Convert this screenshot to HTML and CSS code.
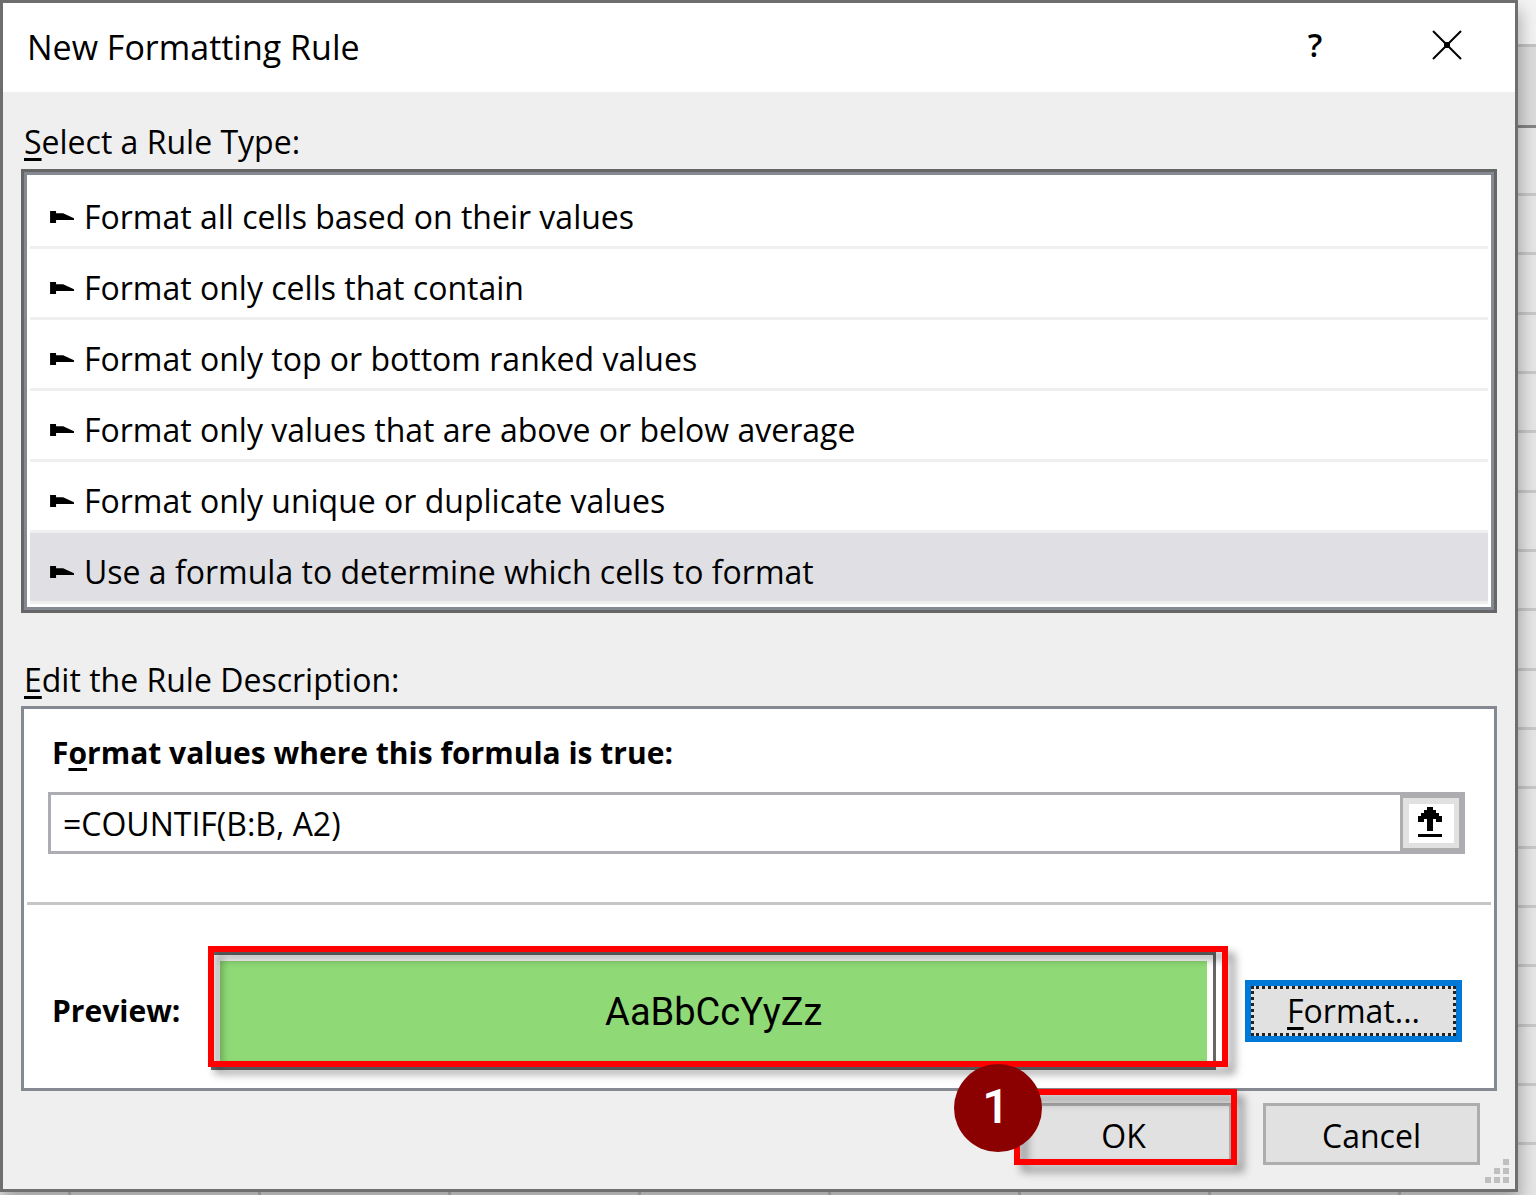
FILE: index.html
```html
<!DOCTYPE html>
<html lang="en">

<head>
    <meta charset="utf-8">
    <title>New Formatting Rule</title>
    <link rel="stylesheet" href="styles.css">
</head>

<body>
    <form class="dialog">
        <div class="title-bar">
            <h1>New Formatting Rule</h1>
            <button type="button" class="title-btn help-btn" aria-label="Help">?</button>
            <button type="button" class="title-btn" aria-label="Close">
                <svg width="30" height="30" viewBox="0 0 30 30">
                    <path d="M1 1L29 29M29 1L1 29" stroke="#000" stroke-width="2" />
                    <rect x="12" y="12" width="6" height="6" />
                </svg>
            </button>
        </div>

        <div class="dialog-body">
            <h2 id="ruleTypeLabel" class="caption"><u>S</u>elect a Rule Type:</h2>
            <div class="rule-list" role="radiogroup" aria-labelledby="ruleTypeLabel">
                <label class="rule"><input type="radio" name="rule">Format all cells based on their values</label>
                <label class="rule"><input type="radio" name="rule">Format only cells that contain</label>
                <label class="rule"><input type="radio" name="rule">Format only top or bottom ranked values</label>
                <label class="rule"><input type="radio" name="rule">Format only values that are above or below average</label>
                <label class="rule"><input type="radio" name="rule">Format only unique or duplicate values</label>
                <label class="rule"><input type="radio" name="rule" checked>Use a formula to determine which cells to format</label>
            </div>

            <h2 class="caption edit-caption"><u>E</u>dit the Rule Description:</h2>
            <div class="description">
                <div class="formula-part">
                    <label class="bold-label" for="formula">F<u>o</u>rmat values where this formula is true:</label>
                    <div class="formula-box">
                        <input type="text" id="formula" value="=COUNTIF(B:B, A2)">
                        <button type="button" class="collapse-btn" aria-label="Collapse dialog">
                            <svg width="45" height="39" viewBox="0 0 45 39">
                                <rect width="45" height="39" fill="#fff" />
                                <path d="M18 3h6v3h3v3h3v3h3v6h-6v-3h-3v12h-6V15h-3v3H9v-6h3V9h3V6h3zM9 30h24v3H9z" />
                            </svg>
                        </button>
                    </div>
                </div>

                <div class="preview-part">
                    <span class="bold-label">Preview:</span>
                    <div class="preview">
                        <div class="preview-fill">AaBbCcYyZz</div>
                        <div class="mark preview-mark"></div>
                    </div>
                    <button type="button" class="format-btn"><span><u>F</u>ormat...</span></button>
                </div>
            </div>

            <div class="actions">
                <div class="ok-wrap">
                    <button type="submit" class="btn">OK</button>
                    <div class="mark ok-mark"></div>
                    <span class="step">1</span>
                </div>
                <button type="button" class="btn">Cancel</button>
            </div>
        </div>

        <svg class="grip" width="24" height="24" viewBox="0 0 24 24" fill="#bfbfbf">
            <path d="M18 0h6v6h-6zM9 9h6v6H9zM18 9h6v6h-6zM0 18h6v6H0zM9 18h6v6H9zM18 18h6v6h-6z" />
        </svg>
    </form>
</body>

</html>
```

FILE: styles.css
```css
* {
    box-sizing: border-box;
    margin: 0;
    padding: 0;
}

/* worksheet behind the dialog */
body {
    min-height: 100vh;
    display: flex;
    padding: 0 18px 3px 0;
    color: #000;
    font-family: "Open Sans", sans-serif;
    font-size: 32px;
    line-height: 44px;
    background:
        linear-gradient(#c3c3c3, #c3c3c3) 0 44px / 100% 3px no-repeat,
        linear-gradient(#858585, #858585) 0 125px / 100% 3px no-repeat,
        linear-gradient(#f3f3f3 44px, #dcdcdc 44px 125px, #e6e6e6 125px 150px, transparent 150px) no-repeat,
        repeating-linear-gradient(90deg, transparent 0 68px, #c3c3c3 68px 71px, transparent 71px 190px),
        repeating-linear-gradient(transparent 0 15px, #c8c8c8 15px 18px, transparent 18px 74px, #c8c8c8 74px 77px, transparent 77px 134px, #c8c8c8 134px 137px, transparent 137px 178px),
        #e6e6e6;
}

button,
input {
    font: inherit;
    color: inherit;
}

u {
    text-decoration-thickness: 3px;
    text-underline-offset: 4px;
    text-decoration-skip-ink: none;
}

.dialog {
    position: relative;
    flex: 1;
    display: flex;
    flex-direction: column;
    border: 3px solid #6e6e6e;
    background: #efefef;
    box-shadow: 2px 10px 16px rgba(0, 0, 0, 0.3);
}

.title-bar {
    display: flex;
    align-items: center;
    height: 89px;
    padding: 0 24px 2px;
    background: #fff;
}

.title-bar h1 {
    flex: 1;
    font-size: 34px;
    font-weight: 400;
}

.title-btn {
    width: 88px;
    height: 84px;
    border: none;
    background: none;
    margin-left: 44px;
    margin-bottom: 4px;
}

.title-btn svg {
    display: block;
    margin: auto;
}

.help-btn {
    font-weight: 600;
}

.dialog-body {
    padding: 28px 18px 24px;
}

.caption {
    padding-left: 3px;
    font-size: 32px;
    font-weight: 400;
}

/* rule types */
.rule-list {
    margin-top: 5px;
    padding: 6px;
    border: 3px solid #666;
    outline: 3px solid #858991;
    outline-offset: -6px;
    background: #fff;
}

.rule {
    display: flex;
    align-items: center;
    gap: 10px;
    height: 71px;
    padding: 10px 18px 0;
    border-bottom: 3px solid #efefef;
}

.rule:has(input:checked) {
    background: #dfdfe4;
}

.rule input {
    appearance: none;
    width: 26px;
    height: 12px;
    background: #000;
    clip-path: polygon(8% 0, 31% 0, 31% 18%, 58% 18%, 100% 60%, 100% 76%, 31% 76%, 31% 100%, 8% 100%);
}

.edit-caption {
    margin-top: 45px;
}

/* rule description */
.description {
    margin-top: 4px;
    padding: 0 3px;
    border: 3px solid #858991;
    background: #fff;
}

.formula-part {
    padding: 22px 26px 48px 21px;
    border-bottom: 3px solid #c6c6c6;
}

.bold-label {
    display: block;
    padding-left: 4px;
    font-size: 30px;
    font-weight: 700;
}

.formula-box {
    display: flex;
    height: 62px;
    margin-top: 17px;
    border: 3px solid #abadb3;
}

.formula-box input {
    flex: 1;
    padding: 2px 12px 0;
    border: none;
    outline: none;
    background: #fff;
}

.collapse-btn {
    width: 62px;
    border: 3px solid #adadad;
    background: #e1e1e1;
}

.collapse-btn svg {
    display: block;
    margin: auto;
}

.preview-part {
    display: flex;
    align-items: center;
    padding: 47px 29px 18px 21px;
}

.preview {
    position: relative;
    flex: 1;
    height: 118px;
    margin: 0 29px 0 31px;
    padding: 6px;
    border: 3px solid #666;
}

.preview-fill {
    display: flex;
    align-items: center;
    justify-content: center;
    height: 100%;
    padding-top: 2px;
    background: #8fda76;
    font-family: Roboto, sans-serif;
    font-size: 38px;
}

.format-btn {
    width: 217px;
    height: 62px;
    padding: 0;
    border: 6px solid #0078d7;
    background: #e1e1e1;
}

.format-btn span {
    display: block;
    height: 50px;
    border: 3px dotted #222;
}

/* buttons */
.actions {
    display: flex;
    justify-content: flex-end;
    gap: 31px;
    padding: 12px 17px 0;
}

.ok-wrap {
    position: relative;
}

.btn {
    display: block;
    width: 217px;
    height: 62px;
    padding-top: 3px;
    border: 3px solid #adadad;
    background: #e1e1e1;
}

/* red frames and step number */
.mark {
    position: absolute;
    border: 6px solid #f00;
    filter: drop-shadow(7px 7px 4px rgba(0, 0, 0, 0.4));
    pointer-events: none;
}

.preview-mark {
    inset: -9px -15px 0 -6px;
}

.ok-mark {
    inset: -14px -5px 0 -1px;
}

.step {
    position: absolute;
    left: -61px;
    top: -39px;
    width: 88px;
    height: 88px;
    padding-right: 4px;
    border-radius: 50%;
    background: #8b0000;
    color: #fff;
    font-family: Roboto, sans-serif;
    font-size: 48px;
    font-weight: 500;
    line-height: 86px;
    text-align: center;
}

.grip {
    position: absolute;
    right: 6px;
    bottom: 6px;
}
```
